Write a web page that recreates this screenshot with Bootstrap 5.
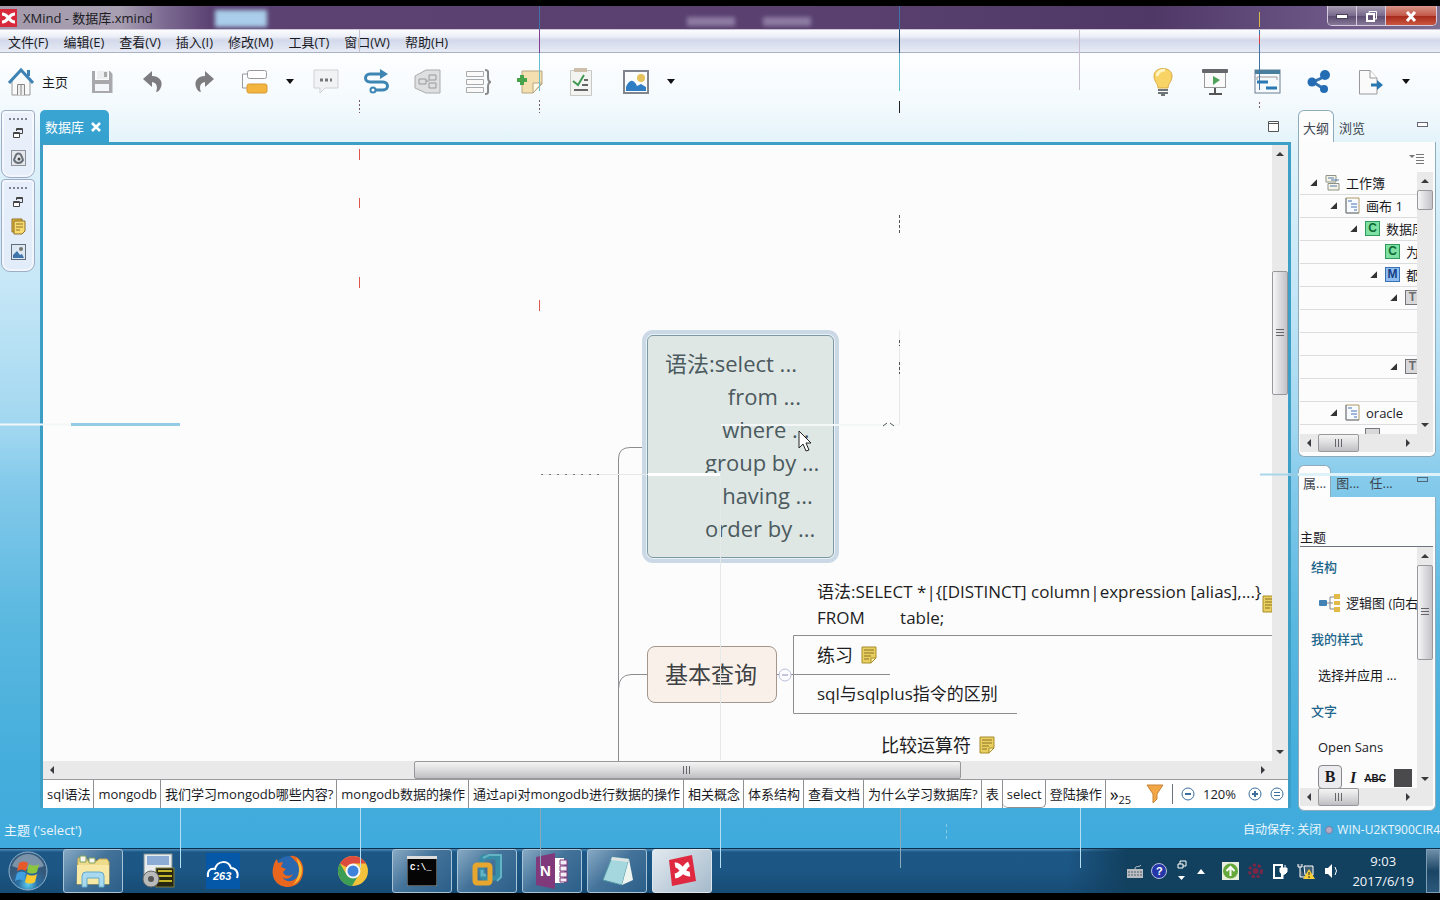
<!DOCTYPE html>
<html lang="zh-CN">
<head>
<meta charset="utf-8">
<meta name="viewport" content="width=device-width, initial-scale=1">
<title>XMind - 数据库.xmind</title>
<link href="https://cdn.jsdelivr.net/npm/bootstrap@5.3.0/dist/css/bootstrap.min.css" rel="stylesheet">
<style>
body{font-family:"Open Sans","Noto Sans CJK SC",sans-serif;font-size:13px;line-height:18px;color:#1b1b1f;background:#000}
button{font:inherit;color:inherit;background:none;border:0;padding:0}
a{color:inherit;text-decoration:none}
svg{display:block;flex:none}
.desktop{height:100vh;min-height:600px;padding:6px 0 7px;overflow:hidden}
.titlebar{height:24px;background:linear-gradient(90deg,#a39bab 0,#a89fb2 120px,#7c6a91 165px,#5b4272 210px,#59406f 60%,#4f3866 80%,#6b5686 92%,#7d6f92);border-bottom:1px solid #cfc6d8}
.titlebar .caption{padding:3px 0 0 6px}
.blurry{filter:blur(2px)}
.glow-tab{width:52px;height:17px;background:#a9cdea;margin-left:62px}
.glow-blob{height:9px;background:#8d7ba3;margin-top:11px}
.appicon{width:17px;height:18px;background:#d8283c;margin-top:3px}
.winbtns{border:1px solid #d6ccdd;border-top:0;border-radius:0 0 5px 5px;height:20px;overflow:hidden;margin-right:3px}
.winbtns button{width:29px;height:20px;background:linear-gradient(#a89db3,#75678a 50%,#5b4c70 51%,#8b7d9c);border-right:1px solid #d6ccdd}
.winbtns .closer{width:50px;border:0;background:linear-gradient(#d89488,#c25647 50%,#a82a1c 51%,#cf5b43)}
.menus{height:23px;background:linear-gradient(#fbfcfe,#eceff7 30%,#d3d9ea 45%,#dfe4f2 80%,#e8ecf6);border-bottom:1px solid #aab2c2;padding:1px 0 0 8px;gap:15px}
.shell{background:linear-gradient(#fdfeff 0,#f4fafd 50px,#dff2fa 100px,#c4e6f6 240px,#9fd6f0 380px,#84caeb 430px,#5cb9e0 560px,#46aedc 700px,#3faadd)}
.toolbar{height:57px;padding:0 25px 0 8px}
.toolbar .home{width:68px;gap:8px}
.tool{width:51px;height:40px;display:flex;align-items:center;justify-content:center}
.toolR .tool{width:52px}
.drop{width:20px;height:40px;display:flex;align-items:center;justify-content:center}
.toolR+.drop{width:18px}
.drop:before{content:"";border:4px solid transparent;border-top:5px solid #111;border-bottom:0}
.rail{width:34px;margin:0 5px 0 1px}
.railbox{border:1px solid #9fadc6;border-radius:4px 4px 9px 9px;background:rgba(233,237,250,.75);padding:7px 0;margin-bottom:1px;box-shadow:inset 0 0 0 2px rgba(255,255,255,.5)}
.railbox button{height:25px}
.grip{width:18px;border-top:2px dotted #7d8190}
.edhead{padding-right:12px}
.edtab{background:linear-gradient(#3aa5d2,#35a1cf);color:#fff;border-radius:5px 5px 0 0;height:32px;padding:2px 8px 0 5px;gap:7px}
.editor{border:3px solid #3d9fc6;border-bottom:0;background:#fcfcfd;margin-bottom:3px}
.canvas{background:#fcfcfd;overflow:hidden}
.topic{position:absolute;white-space:pre;color:#1e1e22;font-size:18px;line-height:26px}
.topic.big{border:1px solid #a3968c;border-radius:8px;font-size:23px;color:#3f4245}
.topic.sel{left:604px;top:190px;width:187px;height:223px;border:1px solid #7c9aa5;background:#dfe7e5;box-shadow:0 0 0 1px #e9f1f5,0 0 0 5px #cbd8e5;border-radius:6px;font-size:22px;line-height:33px;padding:11px 17px;color:#4b5a5e}
.topic.basic{left:604px;top:501px;width:130px;height:57px;background:#f9f1e9;line-height:55px;padding-left:17px}
.topic.t1{left:774px;top:434px;font-size:17px}
.topic.t2{left:774px;top:497px}
.topic.t3{left:774px;top:536px;font-size:17px}
.topic.t4{left:838px;top:587px}
.sbv{width:16px;background:#e9e9ea}
.sbh{height:18px;background:#e9e9ea}
.thumb{border:1px solid #98989c;border-radius:2px;display:flex;align-items:center;justify-content:center}
.sbv .thumb{background:linear-gradient(90deg,#f6f6f6,#dcdcdf 50%,#c3c3c7)}
.sbh .thumb{background:linear-gradient(#f4f4f4,#dcdcde 50%,#bfbfc3)}
.thumb i{width:8px;height:8px;background:repeating-linear-gradient(#66666a 0 1px,transparent 1px 3px)}
.sbh .thumb i{background:repeating-linear-gradient(90deg,#66666a 0 1px,transparent 1px 3px)}
.ar{width:18px;height:18px;display:flex;align-items:center;justify-content:center;flex:none}
.sbv .ar{width:16px}
.ar:before{content:"";border:4px solid transparent}
.ar.up:before{border-bottom-color:#3a3a3e;border-top:0}
.ar.dn:before{border-top-color:#3a3a3e;border-bottom:0}
.ar.lf:before{border-right-color:#3a3a3e;border-left:0}
.ar.rt:before{border-left-color:#3a3a3e;border-right:0}
.sheets{height:29px;background:#fff;border-top:1px solid #9a9a9e}
.sheets .sheet{padding:0 3px 0 4px;border-right:1px solid #8f8f94;white-space:nowrap;height:28px}
.sheets .sheet.cur{border:1px solid #8f8f94;border-width:0 1px 1px 0;border-radius:0 0 5px 5px}
.more{font-size:18px}
.more sub{font-size:11px}
.side{width:138px;margin:0 4px 0 7px;gap:8px}
.pane{min-height:0;flex:1 1 0}
.ptabs{height:32px}
.ptab{padding:3px 4px 0;color:#3d4650;border:1px solid transparent;border-bottom:0;height:32px}
.ptab.on{background:#fdfdfe;border-color:#8eabbb;border-radius:6px 6px 0 0}
.pbody{background:#fcfcfd;border:1px solid #8eabbb;border-top:0;border-radius:0 0 6px 6px;padding:0 2px 4px 1px;overflow:hidden;min-height:0}
.viewbar{height:31px}
.tree li{height:23px;border-bottom:1px solid #dcdce0;gap:5px;white-space:nowrap;overflow:hidden;padding-left:calc(10px + var(--lv)*20px)}
.tree li .tri{width:7px;height:7px;background:#333;clip-path:polygon(100% 0,100% 100%,0 100%);flex:none;margin-right:3px}
.tree li .ico{margin-right:1px}
.sq{width:15px;height:15px;font:bold 12px/13px "Liberation Sans",sans-serif;text-align:center;border:1px solid #2f9a5b;background:#7fe0a4;color:#0d6a34;flex:none}
.sq.m{background:#8fbdf0;border-color:#3b70b4;color:#143f85}
.sq.t{background:#d8d8da;border-color:#77777b;color:#6b6b6f}
.prop{padding-top:2px}
.prop>div{height:36px;padding-left:18px;white-space:nowrap;overflow:hidden}
.prop .hd{color:#1e678b;padding-left:11px;font-weight:500}
.secthead{height:50px}
.fmt{gap:8px}
.fmt button{font-family:"Liberation Serif",serif;font-weight:bold;font-size:16px}
.fmt .bold{border:1px solid #88888c;border-radius:4px;width:24px;height:24px;background:#ececee}
.fmt .strike{font:bold 10px "Liberation Sans",sans-serif;text-decoration:line-through}
.status{height:37px;color:#eaf6fc;padding:0 0 0 4px;white-space:nowrap;overflow:hidden}
.status .acct{font-size:12px}
.taskbar{height:45px;background:linear-gradient(#4f8fbd 0,#1d5785 3px,#1c5684 50%,#174b74);border-top:1px solid #0d2f4b}
.trayside{background:linear-gradient(90deg,transparent,#12405f 60px);padding-left:60px;color:#f1f6fa}
.clock{line-height:20px;margin:0 12px}
.apps{gap:5px}
.app{width:60px;height:44px;display:flex;align-items:center;justify-content:center;border-radius:3px}
.app.start{width:55px}
.app.run{border:1px solid #a8c4d9;background:linear-gradient(135deg,#87a9c3,#44739a 45%,#2b5f89)}
.app.cur{border:1px solid #dce6ee;background:linear-gradient(135deg,#e2e9ef,#a5bacb)}
.desk{width:14px;height:44px;border:1px solid #7d9db5;background:linear-gradient(#6f8fa8,#1b4565 50%,#2b587a)}
.overlay{position:absolute;left:0;top:0;pointer-events:none}
</style>
</head>
<body>
<svg width="0" height="0" class="position-absolute" aria-hidden="true">
 <symbol id="note" viewBox="0 0 16 18"><path d="M1 1H15V12L10 17H1Z" fill="#e8cf5f" stroke="#a88b2b"/><path d="M3 4H13M3 7H13M3 10H10M3 13H8" stroke="#8b7326" stroke-width="1"/><path d="M10 17V12H15Z" fill="#fff3ad" stroke="#a88b2b"/></symbol>
 <symbol id="sheet" viewBox="0 0 15 17"><path d="M1 1H14V16H1Z" fill="#f7fafe" stroke="#b09a62"/><path d="M1 1V16H14" fill="none" stroke="#70809c"/><path d="M3 4H7M6 7H9M6 10H12M9 13H12M9 7H12" stroke="#4773b5"/></symbol>
 <symbol id="restore" viewBox="0 0 10 10"><path d="M3.500 3V.5H9.500V5.500H7M3 1.500H10" fill="none" stroke="#444"/><path d="M.5 4.500H6.500V9.500H.5ZM.5 5.500H6.500" fill="#fff" stroke="#444"/></symbol>
</svg>
<div class="desktop d-flex flex-column position-relative">
 <header class="titlebar d-flex flex-none">
  <div class="appicon d-flex align-items-center justify-content-center"><svg width="15" height="12" viewBox="0 0 15 12"><path d="M1 2C5 2 6 4 7.500 6S11 10 14 10M14 2C10 2 9 4 7.500 6S4 10 1 10" fill="none" stroke="#fff" stroke-width="3"/></svg></div>
  <div class="caption">XMind - 数据库.xmind</div>
  <div class="glow-tab blurry mt-1"></div>
  <div class="flex-grow-1 d-flex justify-content-center gap-4 pe-5"><span class="glow-blob blurry px-4 me-1"></span><span class="glow-blob blurry px-4 me-5"></span></div>
  <div class="winbtns d-flex">
   <button type="button" aria-label="最小化" class="d-flex align-items-center justify-content-center"><svg width="12" height="6"><rect x=".5" y="1.500" width="11" height="4" fill="#fff" stroke="#4a405a"/></svg></button>
   <button type="button" aria-label="还原" class="d-flex align-items-center justify-content-center"><svg width="13" height="13"><path d="M4 3V1.500H11.500V9H10" fill="none" stroke="#fff"/><rect x="2" y="4" width="7" height="7" fill="none" stroke="#fff" stroke-width="2"/></svg></button>
   <button type="button" aria-label="关闭" class="closer d-flex align-items-center justify-content-center"><svg width="12" height="11"><path d="M2 1L10 10M10 1L2 10" stroke="#fff" stroke-width="3"/></svg></button>
  </div>
 </header>
 <nav class="menus d-flex align-items-center">
  <a href="#">文件(F)</a><a href="#">编辑(E)</a><a href="#">查看(V)</a><a href="#">插入(I)</a><a href="#">修改(M)</a><a href="#">工具(T)</a><a href="#">窗口(W)</a><a href="#">帮助(H)</a>
 </nav>
 <div class="shell flex-grow-1 d-flex flex-column" style="min-height:0">
  <div class="toolbar d-flex align-items-center">
   <button type="button" class="home d-flex align-items-center text-nowrap"><svg width="26" height="30" viewBox="0 0 26 30"><path d="M4 14V28H22V14" fill="#fafafa" stroke="#999"/><path d="M9.500 28V17.500H16.500V28M13 18V28" fill="#eee" stroke="#888"/><path d="M1 16L13 3L25 16" fill="none" stroke="#3f83b5" stroke-width="3"/><path d="M20.500 9V3" stroke="#3f83b5" stroke-width="3"/></svg>主页</button>
   <button type="button" class="tool" aria-label="保存"><svg width="22" height="24"><path d="M1 1H4V10H18V1H19L21.500 4V23H1Z" fill="#a9a9ab"/><rect x="6" y="1" width="11" height="8" fill="#eee"/><rect x="13" y="2" width="3" height="5" fill="#aaa"/><rect x="4" y="14" width="14" height="7" fill="#f4f7f9"/></svg></button>
   <button type="button" class="tool" aria-label="撤销"><svg width="20" height="23"><path d="M0 9L9 1V6C17 6 20 12 18 17C17 20 15 22 13 22C15 17 14 13 9 12V17Z" fill="#7d7d80"/></svg></button>
   <button type="button" class="tool" aria-label="重做"><svg width="20" height="23"><path d="M20 9L11 1V6C3 6 0 12 2 17C3 20 5 22 7 22C5 17 6 13 11 12V17Z" fill="#7d7d80"/></svg></button>
   <button type="button" class="tool" aria-label="主题"><svg width="27" height="25"><path d="M6 5H1.500V19H6" fill="none" stroke="#999"/><rect x="6.500" y="1.500" width="19" height="8" rx="2" fill="#fff" stroke="#999"/><rect x="6" y="15" width="20" height="9" rx="2" fill="#f3b53d" stroke="#d69a35"/></svg></button>
   <button type="button" class="drop" aria-label="更多主题"></button>
   <button type="button" class="tool" aria-label="标签"><svg width="26" height="25"><path d="M1 1H25V19H12L7 24V19H1Z" fill="#f1f2f3" stroke="#cfd1d3"/><path d="M7 11H19" stroke="#777" stroke-width="3" stroke-dasharray="3 2"/></svg></button>
   <button type="button" class="tool" aria-label="关系"><svg width="26" height="26"><path d="M19 5H6C0 5 0 13 6 13H19C25 13 25 21 19 21H11" fill="none" stroke="#3d86b3" stroke-width="3"/><path d="M16 0L24 5L16 10Z" fill="#3d86b3"/><circle cx="9" cy="21" r="2.500" fill="#fff" stroke="#3d86b3" stroke-width="2"/></svg></button>
   <button type="button" class="tool" aria-label="外框"><svg width="27" height="25"><path d="M12 1H26V24H12L1 19V7Z" fill="#dedfe1" stroke="#aaa"/><path d="M5 10H12V15H5ZM15 6H22V11H15ZM15 14H22V19H15ZM12 12H15" fill="none" stroke="#999"/></svg></button>
   <button type="button" class="tool" aria-label="概要"><svg width="28" height="26"><path d="M1.500 2.500H18.500V7.500H1.500ZM1.500 10.500H18.500V15.500H1.500ZM1.500 18.500H18.500V23.500H1.500Z" fill="#fafafa" stroke="#aaa"/><path d="M20 1C24 1 23 3 23 8C23 11 24 13 26 13C24 13 23 15 23 18C23 23 24 25 20 25" fill="none" stroke="#888" stroke-width="2"/></svg></button>
   <button type="button" class="tool" aria-label="备注"><svg width="27" height="26"><path d="M6 2H26V15L17 24H6Z" fill="#f3dfb0" stroke="#b9a57e"/><path d="M17 24V14H26Z" fill="#fff8e6" stroke="#b9a57e"/><path d="M1 11H11M6 6V16" stroke="#49a24c" stroke-width="4"/></svg></button>
   <button type="button" class="tool" aria-label="任务"><svg width="24" height="30"><path d="M1.500 3.500H22.500V28.500H1.500Z" fill="#f3f4f2" stroke="#c8c8c4"/><rect x="5" y="1" width="13" height="4" fill="#cdbfa9"/><path d="M4 14L9 18L15 8" fill="none" stroke="#3f9951" stroke-width="2"/><path d="M15 13H19M13 18H19M5 23H19" stroke="#666" stroke-width="2"/></svg></button>
   <button type="button" class="tool ms-1" aria-label="图片"><svg width="26" height="24"><rect x="1" y="1" width="24" height="22" fill="#fbfcfe" stroke="#80858e" stroke-width="2"/><circle cx="18" cy="8" r="4" fill="#e6c25a"/><path d="M3 21V17C6 10 10 8 14 16L18 14L23 17V21Z" fill="#2f7ec4"/></svg></button>
   <button type="button" class="drop" aria-label="更多图片"></button>
   <div class="toolR d-flex ms-auto">
    <button type="button" class="tool" aria-label="头脑风暴"><svg width="22" height="30"><path d="M6 21C6 16 2 15 2 9C2 -1 20 -1 20 9C20 15 16 16 16 21Z" fill="#f8d467" stroke="#d9ab43"/><path d="M5 9C6 4 9 3 13 3" stroke="#fff3c0" stroke-width="3" fill="none"/><path d="M6 23H16M6 26H16M9 28H13" stroke="#6f7478" stroke-width="2"/></svg></button>
    <button type="button" class="tool" aria-label="演示"><svg width="26" height="28"><rect x="2.500" y="4.500" width="21" height="15" fill="#fafafa" stroke="#999"/><rect y="1" width="26" height="4" rx="1" fill="#66676b"/><path d="M11 8L18 12L11 17Z" fill="#50a35a"/><path d="M13 20V26M7 26H20" stroke="#555" stroke-width="2"/></svg></button>
    <button type="button" class="tool" aria-label="甘特图"><svg width="27" height="25"><rect x="1" y="1" width="25" height="23" fill="#f7fafc" stroke="#697f94"/><rect x="1" y="1" width="25" height="4" fill="#477f9d"/><path d="M3 11V8H23V11" fill="none" stroke="#999"/><path d="M3 13H14M12 19H23" stroke="#2978b1" stroke-width="3"/></svg></button>
    <button type="button" class="tool" aria-label="分享"><svg width="24" height="24"><path d="M19 6L6 12L17 19" stroke="#3774ae" stroke-width="3" fill="none"/><circle cx="18" cy="5" r="5" fill="#246db5"/><circle cx="5" cy="12" r="4.500" fill="#246db5"/><circle cx="17" cy="19" r="4" fill="#246db5"/></svg></button>
    <button type="button" class="tool" aria-label="导出"><svg width="26" height="26"><path d="M1.500 1.500H12L19 9V25H1.500Z" fill="#fafafa" stroke="#999"/><path d="M12 1.500V9H19" fill="#fff" stroke="#999"/><path d="M13 16H22" stroke="#2877b1" stroke-width="3"/><path d="M19 11L25 16L19 21Z" fill="#2877b1"/></svg></button>
   </div>
   <button type="button" class="drop" aria-label="更多导出"></button>
  </div>
  <main class="d-flex flex-grow-1" style="min-height:0">
   <aside class="rail">
    <div class="railbox d-flex flex-column align-items-center">
     <span class="grip"></span>
     <button type="button" class="d-flex align-items-center" aria-label="还原视图"><svg width="10" height="10"><use href="#restore"/></svg></button>
     <button type="button" class="d-flex align-items-center" aria-label="图标"><svg width="15" height="16"><rect x=".5" y=".5" width="14" height="15" fill="#e5e7ea" stroke="#8d939c"/><path d="M5 5C6 3 9 3 10 5L12 10C10 14 5 14 3 10Z" fill="none" stroke="#68707a" stroke-width="2"/><circle cx="8" cy="9" r="1.500" fill="#444"/></svg></button>
    </div>
    <div class="railbox d-flex flex-column align-items-center">
     <span class="grip"></span>
     <button type="button" class="d-flex align-items-center" aria-label="还原视图"><svg width="10" height="10"><use href="#restore"/></svg></button>
     <button type="button" class="d-flex align-items-center" aria-label="备注"><svg width="15" height="17"><path d="M1 1H11V14H1Z" fill="#e6b93d" stroke="#8e7126"/><path d="M3 3H14V13L11 16H3Z" fill="#f8db70" stroke="#8e7126"/><path d="M5 6H12M5 9H12M5 12H9" stroke="#8e7126"/></svg></button>
     <button type="button" class="d-flex align-items-center" aria-label="图片"><svg width="15" height="16"><rect x=".5" y=".5" width="14" height="15" fill="#dce9f4" stroke="#5f6d7c"/><path d="M2 14V11L6 7L9 11L11 10L13 14Z" fill="#3d75aa"/><circle cx="10" cy="5" r="2" fill="#74746b"/></svg></button>
    </div>
   </aside>
   <section class="flex-grow-1 d-flex flex-column" style="min-width:0">
    <div class="edhead d-flex align-items-center justify-content-between">
     <button type="button" class="edtab d-flex align-items-center">数据库<svg width="10" height="10"><path d="M1 1L9 9M9 1L1 9" stroke="#fff" stroke-width="2.500"/></svg></button>
     <button type="button" aria-label="最大化"><svg width="11" height="11"><path d="M.5 .5H10.500V10.500H.5ZM.5 2.500H10.500" fill="#fff" stroke="#555"/></svg></button>
    </div>
    <div class="editor d-flex flex-column flex-grow-1" style="min-height:0">
     <div class="d-flex flex-grow-1" style="min-height:0">
      <div class="canvas flex-grow-1 position-relative">
       <svg class="position-absolute top-0 start-0" width="100%" height="100%" fill="none" stroke="#8d8d91">
        <path d="M604 302.500H587Q575.500 302.500 575.500 314V900"/><path d="M604 529.500H588Q575.500 530 575.500 544"/>
        <path d="M734 529.500H847M750.500 568V490.500H2000M750.500 568.500H974"/>
        <circle cx="742" cy="530" r="6" fill="#fafaff" stroke="#bcc1dc"/><path d="M739 530H745" stroke="#8990bd"/>
       </svg>
       <div class="topic big sel">语法:select ...
           from ...
          where ...
       group by ...
          having ...
       order by ...</div>
       <div class="topic big basic">基本查询</div>
       <div class="topic t1">语法:SELECT *|{[DISTINCT] column|expression [alias],...}
FROM        table;</div>
       <div class="topic t2 d-flex align-items-center">练习<svg width="16" height="18" class="ms-2 me-1"><use href="#note"/></svg></div>
       <div class="topic t3">sql与sqlplus指令的区别</div>
       <div class="topic t4 d-flex align-items-center">比较运算符<svg width="16" height="18" class="ms-2 me-1"><use href="#note"/></svg></div>
       <svg class="position-absolute" style="left:1219px;top:450px" width="16" height="18"><use href="#note"/></svg>
       <svg class="position-absolute" style="left:755px;top:285px" width="14" height="23"><path d="M1 1V18L5 14L8 21L11 20L8 13H13Z" fill="#fff" stroke="#222"/></svg>
      </div>
      <div class="sbv d-flex flex-column"><span class="ar up"></span><span style="flex:108 0 0"></span><span class="thumb" style="flex:122 0 0"><i></i></span><span style="flex:347 0 0"></span><span class="ar dn"></span></div>
     </div>
     <div class="sbh d-flex pe-3"><span class="ar lf"></span><span style="flex:353 0 0"></span><span class="thumb" style="flex:546 0 0"><i></i></span><span style="flex:293 0 0"></span><span class="ar rt"></span></div>
     <div class="sheets d-flex align-items-center">
      <button class="sheet" type="button">sql语法</button><button class="sheet" type="button">mongodb</button><button class="sheet" type="button">我们学习mongodb哪些内容?</button><button class="sheet" type="button">mongodb数据的操作</button><button class="sheet" type="button">通过api对mongodb进行数据的操作</button><button class="sheet" type="button">相关概念</button><button class="sheet" type="button">体系结构</button><button class="sheet" type="button">查看文档</button><button class="sheet" type="button">为什么学习数据库?</button><button class="sheet" type="button">表</button><button class="sheet cur" type="button">select</button><button class="sheet" type="button">登陆操作</button>
      <button type="button" class="more ps-1" aria-label="更多画布">»<sub>25</sub></button>
      <div class="ms-auto d-flex align-items-center pe-1 text-nowrap">
       <button type="button" class="pe-2 me-1 border-end border-secondary" aria-label="筛选"><svg width="18" height="20"><path d="M1 1H17L11 10V15L7 19V10Z" fill="#f2a646" stroke="#c78336"/></svg></button>
       <button type="button" class="ms-1" aria-label="缩小"><svg width="14" height="14" fill="none" stroke="#3d6e9e"><circle cx="7" cy="7" r="6"/><path d="M4 7H10" stroke-width="2"/></svg></button>
       <span class="px-1 ms-1 me-2">120%</span>
       <button type="button" class="me-1" aria-label="放大"><svg width="14" height="14" fill="none" stroke="#3d6e9e"><circle cx="7" cy="7" r="6"/><path d="M4 7H10M7 4V10" stroke-width="2"/></svg></button>
       <button type="button" class="ms-1" aria-label="实际大小"><svg width="14" height="14" fill="none" stroke="#3d6e9e"><circle cx="7" cy="7" r="6"/><path d="M4 5.500H10M4 8.500H10"/></svg></button>
      </div>
     </div>
    </div>
   </section>
   <aside class="side d-flex flex-column">
    <div class="pane d-flex flex-column">
     <div class="ptabs d-flex"><button type="button" class="ptab on">大纲</button><button type="button" class="ptab">浏览</button><span class="ms-auto me-2 pt-2 mt-1"><svg width="11" height="5"><rect x=".5" y=".5" width="10" height="4" fill="#fff" stroke="#667"/></svg></span></div>
     <div class="pbody d-flex flex-column flex-grow-1">
      <div class="viewbar text-end pe-2 pt-2"><button type="button" aria-label="视图菜单"><svg width="16" height="12"><path d="M0 3H6L3 6Z" fill="#777"/><path d="M7 2.500H15M7 5.500H15M7 8.500H15M7 11.500H15" stroke="#777"/></svg></button></div>
      <div class="d-flex flex-grow-1" style="min-height:0">
       <ul class="tree list-unstyled m-0 flex-grow-1 overflow-hidden" style="min-width:0">
        <li class="d-flex align-items-center" style="--lv:0"><i class="tri"></i><svg class="ico" width="15" height="17"><path d="M1 1.500H11V8H1ZM3 9.500H14V16H3Z" fill="#f6f4e7" stroke="#8d9384"/><path d="M3 4H9M6 6H14M5 12H12" stroke="#527bb0"/></svg>工作簿</li>
        <li class="d-flex align-items-center" style="--lv:1"><i class="tri"></i><svg class="ico" width="15" height="17"><use href="#sheet"/></svg>画布 1</li>
        <li class="d-flex align-items-center" style="--lv:2"><i class="tri"></i><span class="sq ico">C</span>数据库</li>
        <li class="d-flex align-items-center" style="--lv:3"><i class="tri invisible"></i><span class="sq ico">C</span>为</li>
        <li class="d-flex align-items-center" style="--lv:3"><i class="tri"></i><span class="sq m ico">M</span>都</li>
        <li class="d-flex align-items-center" style="--lv:4"><i class="tri"></i><span class="sq t">T</span></li>
        <li></li><li></li>
        <li class="d-flex align-items-center" style="--lv:4"><i class="tri"></i><span class="sq t">T</span></li>
        <li></li>
        <li class="d-flex align-items-center" style="--lv:1"><i class="tri"></i><svg class="ico" width="15" height="17"><use href="#sheet"/></svg>oracle</li>
        <li class="d-flex align-items-center" style="--lv:2"><i class="tri invisible"></i><span class="sq t"></span></li>
       </ul>
       <div class="sbv d-flex flex-column"><span class="ar up"></span><span class="thumb" style="flex:18 0 0"></span><span style="flex:205 0 0"></span><span class="ar dn"></span></div>
      </div>
      <div class="sbh d-flex pe-3"><span class="ar lf"></span><span class="thumb" style="flex:39 0 0"><i></i></span><span style="flex:40 0 0"></span><span class="ar rt"></span></div>
     </div>
    </div>
    <div class="pane d-flex flex-column">
     <div class="ptabs d-flex"><button type="button" class="ptab on">属...</button><button type="button" class="ptab">图...</button><button type="button" class="ptab">任...</button><span class="ms-auto me-2 pt-2 mt-1"><svg width="11" height="5"><rect x=".5" y=".5" width="10" height="4" fill="none" stroke="#567"/></svg></span></div>
     <div class="pbody d-flex flex-column flex-grow-1">
      <div class="secthead d-flex align-items-end border-bottom border-secondary flex-shrink-0">主题</div>
      <div class="d-flex flex-grow-1" style="min-height:0">
       <div class="prop flex-grow-1 overflow-hidden" style="min-width:0">
        <div class="hd d-flex align-items-center">结构</div>
        <div class="d-flex align-items-center gap-1"><svg width="24" height="20"><path d="M8 10H15M12 4V16M12 4H16M12 16H16" stroke="#888" fill="none"/><rect x="1" y="7" width="8" height="6" rx="1" fill="#4282b4"/><path d="M16 1H22V6H16ZM16 8H22V12H16ZM16 14H22V19H16Z" fill="#e3b947"/></svg>逻辑图 (向右</div>
        <div class="hd d-flex align-items-center">我的样式</div>
        <div class="d-flex align-items-center">选择并应用 ...</div>
        <div class="hd d-flex align-items-center">文字</div>
        <div class="d-flex align-items-center">Open Sans</div>
        <div class="fmt d-flex align-items-start"><button type="button" class="bold">B</button><button type="button" class="fst-italic pt-1">I</button><button type="button" class="strike pt-2">ABC</button><button type="button" aria-label="颜色"><svg width="18" height="18" class="mt-1"><rect width="18" height="18" fill="#4a4a4d"/></svg></button></div>
       </div>
       <div class="sbv d-flex flex-column"><span class="ar up"></span><span class="thumb" style="flex:93 0 0"><i></i></span><span style="flex:109 0 0"></span><span class="ar dn"></span></div>
      </div>
      <div class="sbh d-flex pe-3"><span class="ar lf"></span><span class="thumb" style="flex:39 0 0"><i></i></span><span style="flex:40 0 0"></span><span class="ar rt"></span></div>
     </div>
    </div>
   </aside>
  </main>
  <div class="status d-flex align-items-center justify-content-between"><span>主题 ('select')</span><span class="acct d-flex align-items-center gap-1">自动保存: 关闭 <svg width="8" height="8"><circle cx="4" cy="4" r="3.500" fill="#b6a9c4" stroke="#6f7ea6"/></svg> WIN-U2KT900CIR4</span></div>
 </div>
 <footer class="taskbar d-flex">
  <button type="button" class="app start me-2" aria-label="开始"><svg width="40" height="42" viewBox="0 0 40 42"><defs><radialGradient id="orb" cy=".85"><stop offset="0" stop-color="#5fd0f2"/><stop offset=".5" stop-color="#2a6fa3"/><stop offset="1" stop-color="#35597b"/></radialGradient></defs><circle cx="20" cy="21" r="19" fill="url(#orb)" stroke="#8fb4ce"/><path d="M4 16C10 0 30 0 36 16C28 20 12 20 4 16Z" fill="#fff" opacity=".35"/><path d="M11 13C14 11 17 11 20 13L18 21C15 19 12 19 9 21Z" fill="#e8592a"/><path d="M21 14C24 16 28 16 31 14L29 22C26 24 22 24 19 22Z" fill="#8cc63e"/><path d="M9 23C12 21 15 21 18 23L16 31C13 29 10 29 7 31Z" fill="#3f9fe0"/><path d="M19 24C22 26 26 26 29 24L27 32C24 34 20 34 17 32Z" fill="#fbc930"/></svg></button>
  <div class="apps d-flex">
   <button type="button" class="app run" aria-label="资源管理器"><svg width="36" height="36"><path d="M3 5H11L13 8H22L24 6H32L34 9V31H2Z" fill="#eedc8c" stroke="#c8a94e"/><path d="M5 3H11V9H5ZM14 5H20V10H14Z" fill="#f8f8ee" stroke="#7fa05a"/><path d="M2 12H34V31H2Z" fill="#f7e9a5"/><path d="M7 34V23Q7 19 11 19H25Q29 19 29 23V34H24V25H12V34Z" fill="#a9d9ee" stroke="#62a9cb"/></svg></button>
   <button type="button" class="app" aria-label="截图工具"><svg width="36" height="38"><rect x="4" y="2" width="28" height="24" fill="#e8ecec" stroke="#7d8d94"/><rect x="7" y="4" width="22" height="9" fill="#8cacd6"/><rect x="16" y="16" width="18" height="19" fill="#272611" stroke="#807c40"/><path d="M18 19H32M18 24H32M18 29H32" stroke="#c5b529" stroke-width="2"/><circle cx="11" cy="27" r="8" fill="#b8bbb9" stroke="#666"/><circle cx="11" cy="27" r="3" fill="#555"/></svg></button>
   <button type="button" class="app" aria-label="263云"><svg width="34" height="36"><rect width="34" height="36" fill="#0557a8"/><path d="M2 24C1 18 4 15 9 16C11 8 22 6 25 15C30 15 33 20 31 25" fill="none" stroke="#fff" stroke-width="2"/><text x="7" y="27" font-family="Liberation Sans" font-weight="bold" font-style="italic" font-size="11" fill="#fff">263</text></svg></button>
   <button type="button" class="app" aria-label="Firefox"><svg width="34" height="36"><circle cx="18" cy="17" r="14" fill="#2967ae"/><path d="M19 3C27 1 34 11 32 20C31 29 24 34 17 34C6 34 0 25 2 15C3 10 4 8 6 6L7 10L12 9L10 14L15 16L12 19C13 23 18 24 22 21C20 26 14 27 11 24C15 31 27 29 28 19C29 12 25 8 19 3Z" fill="#e9661f"/><path d="M25 5C33 11 34 25 22 32C30 22 29 13 25 5Z" fill="#f8bb35"/></svg></button>
   <button type="button" class="app" aria-label="Chrome"><svg width="32" height="34" viewBox="0 0 32 32"><circle cx="16" cy="16" r="15" fill="#f4c33b"/><path d="M16 16L3 8.500A15 15 0 0 1 29 8.500H16Z" fill="#dd4b3e"/><path d="M3 8.500A15 15 0 0 0 15 31L22 19L9.500 19.500Z" fill="#3c9d55"/><circle cx="16" cy="16" r="7.500" fill="#f6f6f6"/><circle cx="16" cy="16" r="5.500" fill="#3f82db"/></svg></button>
   <button type="button" class="app run ms-1" aria-label="命令提示符"><svg width="30" height="30"><rect width="30" height="30" fill="#050505" stroke="#aaa"/><rect width="30" height="3" fill="#ddd"/><text x="3" y="14" font-family="Liberation Mono" font-weight="bold" font-size="9" fill="#fff">C:\_</text></svg></button>
   <button type="button" class="app run" aria-label="VMware"><svg width="34" height="36"><rect x="12" y="4" width="16" height="21" rx="2" fill="none" stroke="#368da5" stroke-width="5"/><path d="M13 5L19 2H31V24L27 28" fill="none" stroke="#62b3c3" stroke-width="2"/><rect x="5" y="12" width="15" height="18" rx="2" fill="none" stroke="#e7a62e" stroke-width="5"/><path d="M12 17V22H16" fill="none" stroke="#60b4c4" stroke-width="3"/></svg></button>
   <button type="button" class="app run" aria-label="OneNote"><svg width="34" height="36"><path d="M18 5H29V30H18Z" fill="#fff"/><path d="M25 7H32V12H25ZM25 13H32V18H25ZM25 19H32V24H25ZM25 25H32V29H25Z" fill="#f3eef5" stroke="#80397b"/><path d="M1 4L20 0V36L1 32Z" fill="#80397b"/><text x="5" y="23" font-family="Liberation Sans" font-weight="bold" font-size="15" fill="#fff">N</text></svg></button>
   <button type="button" class="app run" aria-label="记事本"><svg width="34" height="34"><path d="M12 3L29 5L22 31L3 26Z" fill="#a5d7de" stroke="#5799a6"/><path d="M29 5L33 26L22 31Z" fill="#eef4ef"/><path d="M12 3L29 5L28 8L11 6Z" fill="#dfe5e5"/></svg></button>
   <button type="button" class="app cur" aria-label="XMind"><svg width="34" height="34"><path d="M4 6L27 1L31 27L7 32Z" fill="#df2940"/><path d="M10 11C16 10 17 21 25 20M24 10C19 12 18 21 10 22" stroke="#fff" stroke-width="5" fill="none"/></svg></button>
  </div>
  <div class="trayside d-flex align-items-center ms-auto">
   <svg class="me-2" width="16" height="15"><path d="M8 5C8 1 12 4 14 1" fill="none" stroke="#ccc"/><rect y="5" width="16" height="9" fill="#b9bdc1"/><path d="M1 8H15M1 11H15" stroke="#53616c" stroke-dasharray="2 1"/></svg>
   <svg class="me-2" width="16" height="18"><circle cx="8" cy="9" r="7.500" fill="#2537a8" stroke="#b8c0e2"/><text x="5" y="13" font-family="Liberation Sans" font-weight="bold" font-size="11" fill="#fff">?</text></svg>
   <svg class="me-2" width="14" height="24"><path d="M5 5V2H11V7H8M3 5H8V9H3Z" fill="none" stroke="#fff"/><path d="M3 17H10L6.500 21Z" fill="#fff"/></svg>
   <svg class="me-3" width="9" height="8"><path d="M0 7H8L4 2Z" fill="#fff"/></svg>
   <svg class="me-2" width="17" height="18"><rect width="17" height="18" fill="#e8efdc"/><circle cx="8.500" cy="9" r="7.500" fill="#65a83c"/><path d="M8.500 14V6M4.500 9L8.500 5L12.500 9" stroke="#fff" stroke-width="2" fill="none"/></svg>
   <svg class="me-2" width="17" height="18"><circle cx="8.500" cy="9" r="3" fill="#7a2747"/><circle cx="8.500" cy="9" r="6" fill="none" stroke="#7a2747" stroke-width="3" stroke-dasharray="3 2"/></svg>
   <svg class="me-2" width="17" height="18"><rect x="2" y="3" width="8" height="13" fill="none" stroke="#fff" stroke-width="2"/><path d="M8 6H15V10Q11 15 8 10ZM10 3V6M13 3V6M11 12V17" fill="#fff" stroke="#fff"/></svg>
   <svg class="me-2" width="19" height="18"><path d="M1 2V5H5V2M3 5V15H8M7 4H16V13H8Z" fill="#405f74" stroke="#fff"/><path d="M6 17L12 7L18 17Z" fill="#f5ce38"/><path d="M12 10V16" stroke="#222" stroke-dasharray="3 1"/></svg>
   <svg width="16" height="16"><path d="M1 5H4L8 1V15L4 11H1Z" fill="#fff"/><path d="M11 4Q14 8 11 12" stroke="#fff" fill="none"/></svg>
   <div class="clock text-center"><div>9:03</div><div>2017/6/19</div></div>
   <button type="button" class="desk" aria-label="显示桌面"></button>
  </div>
 </footer>
 <svg class="overlay" width="1440" height="900" fill="none" aria-hidden="true">
  <path d="M0 424.500H71M721 425H899" stroke="#f4f7f7" stroke-width="2"/><path d="M71 424.500H180M1288 474.500H1298" stroke="#94cbe5" stroke-width="3"/>
  <path d="M899.500 330V425M541 474.500H720M720.500 475V760" stroke="#e6e9ea"/><path d="M648 474.500H720" stroke="#fff" stroke-width="3"/>
  <path d="M1298 474.500H1440" stroke="#dff2fa" stroke-width="3"/><path d="M1260 474.500H1288" stroke="#a9d6e9" stroke-width="2"/>
  <path d="M180.500 808V868M360.500 808V868M720.500 808V868M1080.500 808V868" stroke="#b4dff2"/><path d="M540.500 808V868M900.500 808V868" stroke="#8ba9b7"/>
  <path d="M539.500 6V30M899.500 6V30M1259.500 30V90" stroke="#3f72a5"/><path d="M539.500 30V53" stroke="#883b93"/><path d="M899.500 30V53" stroke="#234e70"/><path d="M539.500 53V91M899.500 53V91" stroke="#66bdce"/>
  <path d="M1259.500 12V27" stroke="#d9ba49"/><path d="M1259.500 35V44" stroke="#d54343"/><path d="M359.500 30V53M1079.500 30V90" stroke="#c9bed0"/><path d="M359.500 100V113M539.500 100V113M1259.500 102V110" stroke="#7a5b6b" stroke-dasharray="2 2"/><path d="M899.500 101V113" stroke="#222"/>
  <path d="M359.500 149V160M359.500 198V208M359.500 277V288M539.500 300V311" stroke="#e0554c"/><path d="M899.500 215V235M899.500 340V346M899.500 362V374" stroke="#555" stroke-dasharray="3 2"/>
  <path d="M541 474.500H602" stroke="#77777b" stroke-dasharray="2 6"/><path d="M883 426L887 423M890 423L894 426" stroke="#555"/><path d="M946.500 824V842" stroke="#8cc9dd" stroke-dasharray="3 3"/>
 </svg>
</div>
<script src="https://cdn.jsdelivr.net/npm/bootstrap@5.3.0/dist/js/bootstrap.bundle.min.js"></script>
</body>
</html>
